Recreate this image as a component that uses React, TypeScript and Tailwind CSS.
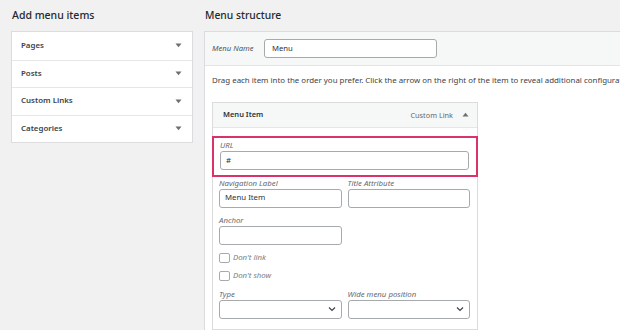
import React from "react";

const Tri = ({ up = false }: { up?: boolean }) => (
  <svg width="7" height="5" viewBox="0 0 7 5" className="shrink-0">
    {up ? <path d="M0.5 4.5 L3.5 0.8 L6.5 4.5 Z" fill="#6b6f74" /> : <path d="M0.5 0.5 L6.5 0.5 L3.5 4.2 Z" fill="#6b6f74" />}
  </svg>
);

const Chevron = () => (
  <svg width="8" height="6" viewBox="0 0 8 6" className="shrink-0">
    <path d="M1 1.5 L4 4.5 L7 1.5" fill="none" stroke="#3c434a" strokeWidth="1.2" />
  </svg>
);

const Label = ({ children }: { children: React.ReactNode }) => (
  <div className="h-[12px] leading-[12px] text-[7.8px] italic text-[#646970] whitespace-nowrap">{children}</div>
);

const Input = ({ value = "", h = "h-[19px]" }: { value?: string; h?: string }) => (
  <div className={`${h} w-full rounded-[3px] border border-[#a7aaad] bg-white flex items-center px-[5px] text-[7.8px] text-[#2c3338]`}>
    {value}
  </div>
);

const Select = () => (
  <div className="h-[19px] w-full rounded-[3px] border border-[#a7aaad] bg-white flex items-center justify-end pr-[5px]">
    <Chevron />
  </div>
);

const Check = ({ label }: { label: string }) => (
  <div className="h-[14px] flex items-center gap-[3px]">
    <div className="w-[11px] h-[10px] rounded-[2px] border border-[#a7aaad] bg-white" />
    <span className="text-[7.8px] italic text-[#787c82]">{label}</span>
  </div>
);

export default function App() {
  const items = ["Pages", "Posts", "Custom Links", "Categories"];
  return (
    <div
      className="w-[620px] h-[330px] bg-[#f1f1f1] flex overflow-hidden pl-[11px] text-[#2c3338]"
      style={{ fontFamily: '"Noto Sans", "Open Sans", sans-serif' }}
    >
      {/* Left column */}
      <div className="w-[182px] shrink-0 flex flex-col">
        <div className="h-[31px] flex items-center pl-[1px] text-[10.5px] font-medium text-[#23282d]">Add menu items</div>
        <div className="border border-[#dcdcde] bg-white">
          {items.map((t, i) => (
            <div
              key={t}
              className={`h-[27.5px] flex items-center justify-between pl-[9px] pr-[10px] ${i > 0 ? "border-t border-[#e6e6e6]" : ""}`}
            >
              <span className="text-[7.9px] font-semibold text-[#3c434a]">{t}</span>
              <Tri />
            </div>
          ))}
        </div>
      </div>

      {/* Right column */}
      <div className="ml-[11px] flex-1 flex flex-col min-w-0">
        <div className="h-[31px] flex items-center pl-[1px] text-[10.3px] font-medium text-[#23282d] whitespace-nowrap">
          Menu structure
        </div>
        <div className="flex-1 border-l border-t border-[#dcdcde] bg-white flex flex-col">
          <div className="h-[34px] bg-[#f6f7f7] border-b border-[#e2e4e7] flex items-center pl-[7px]">
            <span className="w-[52px] text-[7.7px] italic text-[#50575e]">Menu Name</span>
            <div className="w-[173px] h-[19px] rounded-[3px] border border-[#a7aaad] bg-white flex items-center px-[7px] text-[7.7px] text-[#2c3338]">
              Menu
            </div>
          </div>
          <div className="pl-[7px] pt-[7px] h-[14px] leading-[14px] box-content text-[7.9px] text-[#3c434a] whitespace-nowrap">
            Drag each item into the order you prefer. Click the arrow on the right of the item to reveal additional configuration options.
          </div>
          <div className="ml-[7px] mt-[15px] w-[266px] flex-1 border border-[#dcdcde] bg-white flex flex-col">
            <div className="h-[25px] bg-[#f6f7f7] border-b border-[#e6e6e6] flex items-center pl-[10px] pr-[8px]">
              <span className="text-[7.5px] font-semibold text-[#2c3338]">Menu Item</span>
              <span className="ml-auto text-[7.3px] text-[#646970]">Custom Link</span>
              <span className="ml-[9px] mb-[1px]"><Tri up /></span>
            </div>
            <div className="relative h-[8px]">
              <span className="absolute right-[10px] top-[-1px] text-[5px] leading-[5px] text-[#c3c4c7]">· ·</span>
            </div>
            <div className="-mx-[1px] border-2 border-[#d8346a] pl-[6px] pr-[7px] pt-[1px] pb-[5px]">
              <Label>URL</Label>
              <Input value="#" />
            </div>
            <div className="px-[6px] pr-[7px]">
              <div className="grid grid-cols-2 gap-x-[6px]">
                <div>
                  <Label>Navigation Label</Label>
                  <Input value="Menu Item" h="h-[18.5px]" />
                </div>
                <div>
                  <Label>Title Attribute</Label>
                  <Input h="h-[18.5px]" />
                </div>
              </div>
              <div className="grid grid-cols-2 gap-x-[6px] mt-[6px]">
                <div>
                  <Label>Anchor</Label>
                  <Input />
                </div>
              </div>
              <div className="mt-[6px]">
                <Check label="Don't link" />
              </div>
              <div className="mt-[4.5px]">
                <Check label="Don't show" />
              </div>
              <div className="grid grid-cols-2 gap-x-[6px] mt-[4.5px]">
                <div>
                  <Label>Type</Label>
                  <Select />
                </div>
                <div>
                  <Label>Wide menu position</Label>
                  <Select />
                </div>
              </div>
            </div>
          </div>
        </div>
      </div>
    </div>
  );
}
